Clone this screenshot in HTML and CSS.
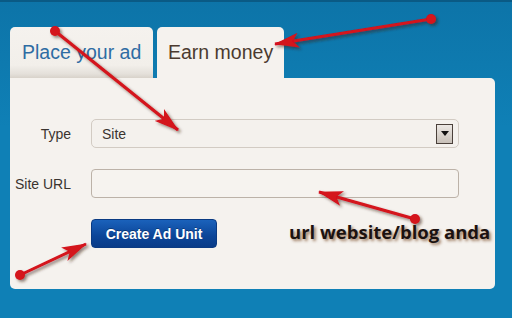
FILE: index.html
```html
<!DOCTYPE html>
<html>
<head>
<meta charset="utf-8">
<link rel="stylesheet" href="styles.css">
</head>
<body>
<div class="page">
  <div class="tabs">
    <div class="tab tab-inactive">Place your ad</div>
    <div class="tab tab-active">Earn money</div>
  </div>
  <div class="panel">
    <div class="form">
      <label class="label">Type</label>
      <div class="select">
        <span class="select-text">Site</span>
        <span class="select-btn"><span class="tri"></span></span>
      </div>
      <label class="label">Site URL</label>
      <div class="input"></div>
      <span></span>
      <div class="btn-row"><button class="btn">Create Ad Unit</button></div>
    </div>
  </div>
</div>
<div class="note">url website/blog anda</div>
<svg class="arrows" width="512" height="318" viewBox="0 0 512 318">
  <defs>
    <filter id="sh" x="-20%" y="-20%" width="140%" height="140%">
      <feDropShadow dx="2" dy="2" stdDeviation="1.5" flood-color="#3a1a0a" flood-opacity="0.55"/>
    </filter>
    <marker id="head" markerUnits="userSpaceOnUse" markerWidth="26" markerHeight="16" viewBox="0 -8 26 16" refX="24" refY="0" orient="auto">
      <path d="M0,-7.5 L25,0 L0,7.5 L6,0 Z" fill="#d4121b"/>
    </marker>
  </defs>
  <g filter="url(#sh)" stroke="#d4121b" stroke-width="3" fill="#d4121b">
    <line x1="55" y1="29" x2="178" y2="128" marker-end="url(#head)"/>
    <circle cx="55" cy="29" r="5" stroke="none"/>
    <line x1="431" y1="17" x2="275" y2="42" marker-end="url(#head)"/>
    <circle cx="431" cy="17" r="5" stroke="none"/>
    <line x1="415" y1="217" x2="319" y2="190" marker-end="url(#head)"/>
    <circle cx="415" cy="217" r="5" stroke="none"/>
    <line x1="20" y1="273" x2="86" y2="242" marker-end="url(#head)"/>
    <circle cx="20" cy="273" r="5" stroke="none"/>
  </g>
</svg>
</body>
</html>
```

FILE: styles.css
```css
html, body {
  margin: 0;
  padding: 0;
}
body {
  width: 512px;
  height: 318px;
  overflow: hidden;
  background: linear-gradient(#0d74a8, #0f80b6 40%, #0f80b6);
  border-top: 2px solid #0a5a85;
  box-sizing: border-box;
  position: relative;
  font-family: "Liberation Sans", Arial, sans-serif;
}
.page {
  padding: 25px 0 0 10px;
}
.tabs {
  display: flex;
  gap: 4px;
  height: 51px;
}
.tab {
  box-sizing: border-box;
  height: 51px;
  font-size: 19.5px;
  line-height: 51px;
  border-radius: 5px 5px 0 0;
}
.tab-inactive {
  width: 143px;
  padding-left: 12px;
  color: #2e6ca3;
  background: linear-gradient(#f5f2ee, #f2efea 75%, #e4e0da 92%, #d8d2ca);
}
.tab-active {
  width: 127px;
  padding-left: 11px;
  color: #4b3a2f;
  background: #f5f2ee;
}
.panel {
  width: 485px;
  height: 211px;
  background: #f5f2ee;
  border-radius: 0 5px 5px 5px;
  box-sizing: border-box;
  padding-top: 41px;
}
.form {
  display: grid;
  grid-template-columns: 61px 368px;
  column-gap: 20px;
  row-gap: 21px;
  align-items: center;
}
.label {
  text-align: right;
  font-size: 14px;
  color: #3a3430;
}
.select {
  height: 29px;
  box-sizing: border-box;
  border: 1px solid #d2cbc3;
  border-radius: 5px;
  display: flex;
  align-items: center;
  justify-content: space-between;
  padding: 0 5px 0 10px;
  background: #f4f1ed;
}
.select-text {
  font-size: 14px;
  color: #3a3430;
}
.select-btn {
  width: 17px;
  height: 20px;
  box-sizing: border-box;
  border: 1px solid #4a403a;
  background: linear-gradient(#ece8e4, #c8c0b8);
  display: flex;
  align-items: center;
  justify-content: center;
}
.tri {
  width: 0;
  height: 0;
  border-left: 4px solid transparent;
  border-right: 4px solid transparent;
  border-top: 5px solid #111;
}
.input {
  height: 29px;
  box-sizing: border-box;
  border: 1px solid #bcb2a8;
  border-radius: 4px;
  background: #f6f3ef;
}
.btn-row {
  display: flex;
}
.btn {
  width: 126px;
  height: 29px;
  border: 1px solid #0a3a82;
  border-radius: 4px;
  background: linear-gradient(#1b62bb, #0b4598 60%, #093b88);
  color: #fff;
  font-family: "Liberation Sans", Arial, sans-serif;
  font-weight: bold;
  font-size: 14px;
  padding: 0;
  text-shadow: 0 -1px 0 rgba(0,0,0,0.3);
}
.note {
  position: absolute;
  left: 289px;
  top: 217px;
  font-family: "Open Sans", sans-serif;
  font-weight: bold;
  font-size: 18.5px;
  color: #1c1210;
  text-shadow: 2px 2px 3px rgba(110,60,20,0.65);
  white-space: nowrap;
}
.arrows {
  position: absolute;
  left: 0;
  top: 0;
}
```
